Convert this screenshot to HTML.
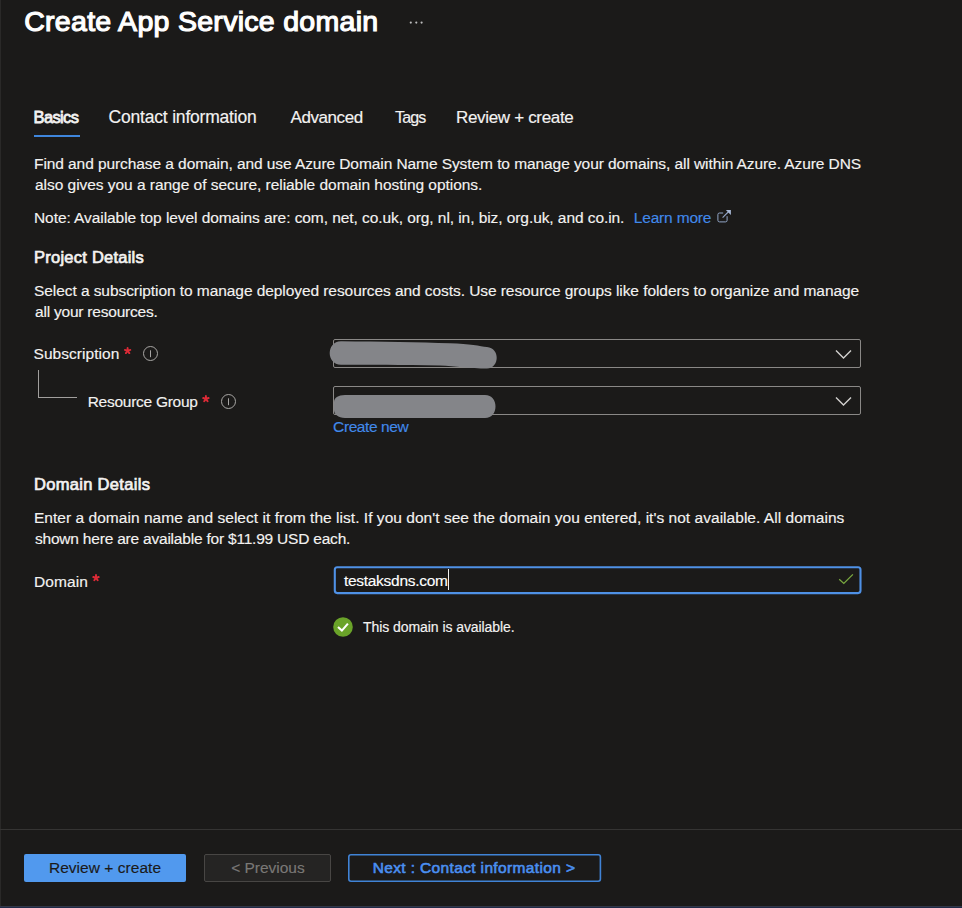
<!DOCTYPE html>
<html><head><meta charset="utf-8">
<style>
html,body{margin:0;padding:0;}
body{width:962px;height:908px;overflow:hidden;background:#1b1a19;position:relative;font-family:"Liberation Sans",sans-serif;}
.t{position:absolute;white-space:pre;line-height:1;}
.a{position:absolute;}
</style></head><body>
<div class="a" style="left:0;top:0;width:1px;height:908px;background:#2a2928"></div>
<!-- ellipsis -->
<svg class="a" style="left:400px;top:12px" width="32" height="20" viewBox="400 12 32 20"><circle cx="410.8" cy="22.6" r="1.1" fill="#bdbdbd"/><circle cx="416.3" cy="22.6" r="1.1" fill="#bdbdbd"/><circle cx="421.6" cy="22.6" r="1.1" fill="#bdbdbd"/></svg>
<!-- tab underline -->
<div class="a" style="left:34px;top:134.6px;width:46px;height:2.2px;background:#3f86dc"></div>
<!-- external link icon -->
<svg class="a" style="left:700px;top:200px" width="40" height="30" viewBox="700 200 40 30">
 <path d="M723.2 213H719.5A1.6 1.6 0 0 0 717.9 214.6V220.3A1.6 1.6 0 0 0 719.5 221.9H725.5A1.6 1.6 0 0 0 727.1 220.3V216.2" fill="none" stroke="#93a6c8" stroke-width="1"/>
 <path d="M722.6 217.6L729.2 211" fill="none" stroke="#93a6c8" stroke-width="1.1"/>
 <path d="M725.9 210.1H730.9V215Z" fill="#a9b9d6"/>
</svg>
<!-- required asterisks -->
<svg class="a" style="left:0;top:0" width="962" height="908"><path d="M127.60 350.80L127.60 347.95M127.60 350.80L130.31 349.92M127.60 350.80L129.28 353.11M127.60 350.80L125.92 353.11M127.60 350.80L124.89 349.92M205.90 398.90L205.90 396.05M205.90 398.90L208.61 398.02M205.90 398.90L207.58 401.21M205.90 398.90L204.22 401.21M205.90 398.90L203.19 398.02M96.00 577.90L96.00 575.05M96.00 577.90L98.71 577.02M96.00 577.90L97.68 580.21M96.00 577.90L94.32 580.21M96.00 577.90L93.29 577.02" stroke="#dc2a36" stroke-width="1.9" stroke-linecap="round" fill="none"/></svg>
<!-- info icons -->
<svg class="a" style="left:143px;top:346px" width="15" height="15" viewBox="0 0 15 15">
 <circle cx="7.5" cy="7.5" r="7" fill="none" stroke="#a8a6a4" stroke-width="1"/>
 <path d="M7.5 4.3V11.2" stroke="#a8a6a4" stroke-width="1"/>
</svg>
<svg class="a" style="left:221px;top:394px" width="15" height="15" viewBox="0 0 15 15">
 <circle cx="7.5" cy="7.5" r="7" fill="none" stroke="#a8a6a4" stroke-width="1"/>
 <path d="M7.5 4.3V11.2" stroke="#a8a6a4" stroke-width="1"/>
</svg>
<!-- tree lines -->
<div class="a" style="left:38px;top:370px;width:1px;height:28px;background:#a19f9d"></div>
<div class="a" style="left:38px;top:397px;width:39px;height:1px;background:#a19f9d"></div>
<!-- dropdowns -->
<div class="a" style="left:333px;top:339px;width:526px;height:27px;border:1px solid #8a8886;border-radius:2px"></div>
<div class="a" style="left:333px;top:386px;width:526px;height:27px;border:1px solid #8a8886;border-radius:2px"></div>
<svg class="a" style="left:835px;top:349px" width="17" height="10" viewBox="0 0 17 10"><path d="M1 1.5l7.5 7.5 7.5-7.5" fill="none" stroke="#d2d0ce" stroke-width="1.4"/></svg>
<svg class="a" style="left:835px;top:396px" width="17" height="10" viewBox="0 0 17 10"><path d="M1 1.5l7.5 7.5 7.5-7.5" fill="none" stroke="#d2d0ce" stroke-width="1.4"/></svg>
<!-- redaction blobs -->
<svg class="a" style="left:0;top:0" width="962" height="908">
 <path d="M341 341.2 C380 341.5 420 342.2 450 343.2 C470 344 480 346 487 347 C500 348 500 368 487 368.5 C470 368.5 455 366 440 365.5 C400 365 370 364.8 341 364.8 C326 364.5 326 341.5 341 341.2Z" fill="#848589"/>
 <path d="M345 395 H485 C499 395 499 418 485 418 H345 C338 418 334 414 334 410 V402 C334 398 338 395 345 395Z" fill="#848589"/>
</svg>
<!-- domain input -->
<svg class="a" style="left:330px;top:562px" width="536" height="36" viewBox="330 562 536 36"><rect x="334.8" y="567.2" width="525.7" height="25.9" rx="2.5" fill="none" stroke="#4f91e6" stroke-width="2.1"/></svg>
<div class="a" style="left:448px;top:569px;width:1px;height:21px;background:#f3f2f1"></div>
<svg class="a" style="left:838px;top:572px" width="17" height="14" viewBox="0 0 17 14"><path d="M1.2 7.3L5.8 11.4L14.9 2.4" fill="none" stroke="#7aa940" stroke-width="1.3"/></svg>
<!-- availability -->
<svg class="a" style="left:333px;top:617px" width="20" height="20" viewBox="0 0 20 20">
 <circle cx="10" cy="10" r="9.8" fill="#6aa329"/>
 <path d="M5 9.9L8.9 13.6L14.9 6.6" fill="none" stroke="#ffffff" stroke-width="2.1"/>
</svg>
<!-- footer -->
<div class="a" style="left:0;top:829px;width:962px;height:1px;background:#353433"></div>
<div class="a" style="left:24px;top:854px;width:162px;height:28px;background:#5199ee;border-radius:2px"></div>
<div class="a" style="left:204px;top:854px;width:125px;height:26px;background:#252423;border:1px solid #484644;border-radius:2px"></div>
<svg class="a" style="left:346px;top:852px" width="258" height="32" viewBox="346 852 258 32"><rect x="348.8" y="854.7" width="251.6" height="26.6" rx="2.2" fill="none" stroke="#4083d6" stroke-width="1.6"/></svg>
<div class="a" style="left:0;top:906px;width:962px;height:1px;background:#323746"></div><div class="a" style="left:0;top:907px;width:962px;height:1px;background:#1f2a48"></div>
<div class="t" style="left:24.2px;top:6.7px;font-size:28.5px;font-weight:400;color:#ffffff;letter-spacing:0.292px;-webkit-text-stroke:1.2px #ffffff;">Create App Service domain</div>
<div class="t" style="left:33.5px;top:108.6px;font-size:16.5px;font-weight:400;color:#f3f2f1;letter-spacing:-0.620px;-webkit-text-stroke:0.8px #f3f2f1;">Basics</div>
<div class="t" style="left:108.6px;top:108.6px;font-size:17.5px;font-weight:400;color:#f3f2f1;letter-spacing:-0.200px;-webkit-text-stroke:0.15px #f3f2f1;">Contact information</div>
<div class="t" style="left:290.6px;top:108.6px;font-size:17px;font-weight:400;color:#f3f2f1;letter-spacing:-0.443px;-webkit-text-stroke:0.15px #f3f2f1;">Advanced</div>
<div class="t" style="left:395.0px;top:109.6px;font-size:16px;font-weight:400;color:#f3f2f1;letter-spacing:-0.867px;-webkit-text-stroke:0.15px #f3f2f1;">Tags</div>
<div class="t" style="left:456.0px;top:108.6px;font-size:17px;font-weight:400;color:#f3f2f1;letter-spacing:-0.329px;-webkit-text-stroke:0.15px #f3f2f1;">Review + create</div>
<div class="t" style="left:34.0px;top:155.5px;font-size:15.5px;font-weight:400;color:#f3f2f1;letter-spacing:-0.077px;-webkit-text-stroke:0.15px #f3f2f1;">Find and purchase a domain, and use Azure Domain Name System to manage your domains, all within Azure. Azure DNS</div>
<div class="t" style="left:35.0px;top:176.6px;font-size:15.5px;font-weight:400;color:#f3f2f1;letter-spacing:-0.037px;-webkit-text-stroke:0.15px #f3f2f1;">also gives you a range of secure, reliable domain hosting options.</div>
<div class="t" style="left:34.0px;top:210.3px;font-size:15.5px;font-weight:400;color:#f3f2f1;letter-spacing:-0.070px;-webkit-text-stroke:0.15px #f3f2f1;">Note: Available top level domains are: com, net, co.uk, org, nl, in, biz, org.uk, and co.in.</div>
<div class="t" style="left:633.8px;top:210.3px;font-size:15.5px;font-weight:400;color:#4189ea;letter-spacing:-0.178px;-webkit-text-stroke:0.15px #4189ea;">Learn more</div>
<div class="t" style="left:34.0px;top:248.8px;font-size:16.5px;font-weight:400;color:#f3f2f1;letter-spacing:0.243px;-webkit-text-stroke:0.7px #f3f2f1;">Project Details</div>
<div class="t" style="left:34.0px;top:283.4px;font-size:15.5px;font-weight:400;color:#f3f2f1;letter-spacing:-0.069px;-webkit-text-stroke:0.15px #f3f2f1;">Select a subscription to manage deployed resources and costs. Use resource groups like folders to organize and manage</div>
<div class="t" style="left:35.0px;top:303.5px;font-size:15.5px;font-weight:400;color:#f3f2f1;letter-spacing:-0.211px;-webkit-text-stroke:0.15px #f3f2f1;">all your resources.</div>
<div class="t" style="left:33.6px;top:346.1px;font-size:15.5px;font-weight:400;color:#f3f2f1;letter-spacing:0.036px;-webkit-text-stroke:0.15px #f3f2f1;">Subscription</div>
<div class="t" style="left:87.7px;top:393.8px;font-size:15.5px;font-weight:400;color:#f3f2f1;letter-spacing:-0.269px;-webkit-text-stroke:0.15px #f3f2f1;">Resource Group</div>
<div class="t" style="left:333.1px;top:418.8px;font-size:15.5px;font-weight:400;color:#4189ea;letter-spacing:-0.411px;-webkit-text-stroke:0.15px #4189ea;">Create new</div>
<div class="t" style="left:34.0px;top:475.6px;font-size:16.5px;font-weight:400;color:#f3f2f1;letter-spacing:0.308px;-webkit-text-stroke:0.7px #f3f2f1;">Domain Details</div>
<div class="t" style="left:34.0px;top:509.6px;font-size:15.5px;font-weight:400;color:#f3f2f1;letter-spacing:0.033px;-webkit-text-stroke:0.15px #f3f2f1;">Enter a domain name and select it from the list. If you don't see the domain you entered, it's not available. All domains</div>
<div class="t" style="left:35.0px;top:531.4px;font-size:15.5px;font-weight:400;color:#f3f2f1;letter-spacing:-0.209px;-webkit-text-stroke:0.15px #f3f2f1;">shown here are available for $11.99 USD each.</div>
<div class="t" style="left:34.0px;top:573.8px;font-size:15.5px;font-weight:400;color:#f3f2f1;letter-spacing:0.080px;-webkit-text-stroke:0.15px #f3f2f1;">Domain</div>
<div class="t" style="left:343.9px;top:572.6px;font-size:15.5px;font-weight:400;color:#ffffff;letter-spacing:-0.277px;-webkit-text-stroke:0.15px #ffffff;">testaksdns.com</div>
<div class="t" style="left:363.1px;top:619.7px;font-size:14px;font-weight:400;color:#f3f2f1;letter-spacing:-0.071px;-webkit-text-stroke:0.15px #f3f2f1;">This domain is available.</div>
<div class="t" style="left:48.9px;top:859.6px;font-size:15.5px;font-weight:400;color:#1b1a19;letter-spacing:0.043px;-webkit-text-stroke:0.15px #1b1a19;">Review + create</div>
<div class="t" style="left:231.2px;top:860.0px;font-size:15.5px;font-weight:400;color:#7a7876;letter-spacing:-0.022px;-webkit-text-stroke:0.15px #7a7876;">&lt; Previous</div>
<div class="t" style="left:372.7px;top:860.0px;font-size:15.5px;font-weight:400;color:#4a8ff0;letter-spacing:0.359px;-webkit-text-stroke:0.6px #4a8ff0;">Next : Contact information &gt;</div>
</body></html>
